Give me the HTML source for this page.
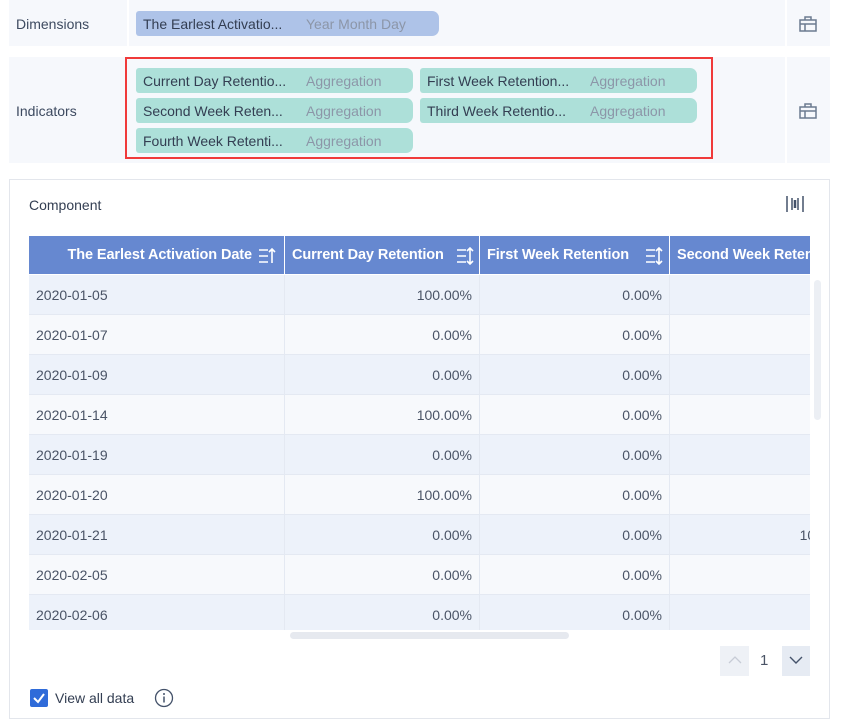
<!DOCTYPE html>
<html><head><style>
*{box-sizing:border-box;margin:0;padding:0}
body{width:846px;height:716px;background:#fff;font-family:"Liberation Sans",sans-serif;position:relative;overflow:hidden;color:#333e52}
.a{position:absolute}
.row{background:#f6f8fc}
.lab{font-size:14px;color:#3d4a60}
.pill{position:absolute;height:25px;border-radius:3px 7px 7px 3px;font-size:14px;line-height:26px;padding-left:7px;color:#333e52;white-space:nowrap}
.pill span{position:absolute;left:170px;color:#8c96a8}
.d{background:#aec3e8}
.i{background:#ade0d9}
.th{position:absolute;top:236px;height:38px;background:#6688d0;color:#fff;font-weight:bold;font-size:14px;line-height:39px;white-space:nowrap;overflow:hidden;border-right:1px solid #fff;letter-spacing:-0.1px}
.th svg{position:absolute;top:11px}
.tr{position:absolute;left:29px;width:781px;height:40px;border-bottom:1px solid #e4e9f2;font-size:14px;line-height:41px}
.c{position:absolute;top:0;height:40px;border-right:1px solid #e4e9f2;color:#4a5466}
</style></head><body>
<div class="a row" style="left:9px;top:0;width:821px;height:46px"></div>
<div class="a" style="left:127px;top:0;width:2px;height:46px;background:#fff"></div>
<div class="a" style="left:785px;top:0;width:2px;height:46px;background:#fff"></div>
<div class="a lab" style="left:16px;top:16px">Dimensions</div>
<div class="pill d" style="left:136px;top:11px;width:303px">The Earlest Activatio...<span>Year Month Day</span></div>
<svg class="a" style="left:798px;top:14px" width="20" height="20" viewBox="0 0 20 20" fill="none" stroke="#6b7a90" stroke-width="1.5"><path d="M7 6V3h6v3M2 6h16v11H2zM2 10h16M7 10v7"/></svg>

<div class="a row" style="left:9px;top:57px;width:821px;height:106px"></div>
<div class="a" style="left:785px;top:57px;width:2px;height:106px;background:#fff"></div>
<div class="a lab" style="left:16px;top:103px">Indicators</div>
<div class="a" style="left:125px;top:57px;width:588px;height:102px;border:2px solid #f03a3a"></div>
<div class="pill i" style="left:136px;top:68px;width:277px">Current Day Retentio...<span>Aggregation</span></div>
<div class="pill i" style="left:420px;top:68px;width:277px">First Week Retention...<span>Aggregation</span></div>
<div class="pill i" style="left:136px;top:98px;width:277px">Second Week Reten...<span>Aggregation</span></div>
<div class="pill i" style="left:420px;top:98px;width:277px">Third Week Retentio...<span>Aggregation</span></div>
<div class="pill i" style="left:136px;top:128px;width:277px">Fourth Week Retenti...<span>Aggregation</span></div>
<svg class="a" style="left:798px;top:101px" width="20" height="20" viewBox="0 0 20 20" fill="none" stroke="#6b7a90" stroke-width="1.5"><path d="M7 6V3h6v3M2 6h16v11H2zM2 10h16M7 10v7"/></svg>

<div class="a" style="left:9px;top:179px;width:821px;height:540px;border:1px solid #e3e6ec"></div>
<div class="a" style="left:29px;top:197px;font-size:14px;color:#333e52">Component</div>
<svg class="a" style="left:786px;top:195px" width="18" height="18" viewBox="0 0 18 18" stroke="#44526a" stroke-width="1.5"><path d="M1 1v16M17 1v16M6 3v12M12 3v12"/><path d="M9 5v8" stroke-width="2.5"/></svg>

<div class="th" style="left:29px;width:256px;text-align:right;padding-right:32px;font-size:14.5px">The Earlest Activation Date<svg style="right:8px" width="18" height="18" fill="none" stroke="#fff" stroke-width="1.6"><path d="M1 3h9M1 9h9M1 15h9M14 16V2M11 5l3-3 3 3"/></svg></div>
<div class="th" style="left:285px;width:195px;padding-left:7px;font-size:14.5px">Current Day Retention<svg style="left:171px" width="18" height="18" fill="none" stroke="#fff" stroke-width="1.6"><path d="M1 3h9M1 9h9M1 15h9M14 1v16M11 4l3-3 3 3M11 14l3 3 3-3"/></svg></div>
<div class="th" style="left:480px;width:190px;padding-left:7px;font-size:14.5px">First Week Retention<svg style="right:6px" width="18" height="18" fill="none" stroke="#fff" stroke-width="1.6"><path d="M1 3h9M1 9h9M1 15h9M14 1v16M11 4l3-3 3 3M11 14l3 3 3-3"/></svg></div>
<div class="th" style="left:670px;width:140px;padding-left:7px;border-right:none;font-size:14.5px">Second Week Retention</div>

<div class="tr" style="top:275px;background:#edf2fa"><div class="c" style="left:0;width:256px;padding-left:7px">2020-01-05</div><div class="c" style="left:256px;width:195px;text-align:right;padding-right:7px">100.00%</div><div class="c" style="left:451px;width:190px;text-align:right;padding-right:7px">0.00%</div></div>
<div class="tr" style="top:315px;background:#f7f9fc"><div class="c" style="left:0;width:256px;padding-left:7px">2020-01-07</div><div class="c" style="left:256px;width:195px;text-align:right;padding-right:7px">0.00%</div><div class="c" style="left:451px;width:190px;text-align:right;padding-right:7px">0.00%</div></div>
<div class="tr" style="top:355px;background:#edf2fa"><div class="c" style="left:0;width:256px;padding-left:7px">2020-01-09</div><div class="c" style="left:256px;width:195px;text-align:right;padding-right:7px">0.00%</div><div class="c" style="left:451px;width:190px;text-align:right;padding-right:7px">0.00%</div></div>
<div class="tr" style="top:395px;background:#f7f9fc"><div class="c" style="left:0;width:256px;padding-left:7px">2020-01-14</div><div class="c" style="left:256px;width:195px;text-align:right;padding-right:7px">100.00%</div><div class="c" style="left:451px;width:190px;text-align:right;padding-right:7px">0.00%</div></div>
<div class="tr" style="top:435px;background:#edf2fa"><div class="c" style="left:0;width:256px;padding-left:7px">2020-01-19</div><div class="c" style="left:256px;width:195px;text-align:right;padding-right:7px">0.00%</div><div class="c" style="left:451px;width:190px;text-align:right;padding-right:7px">0.00%</div></div>
<div class="tr" style="top:475px;background:#f7f9fc"><div class="c" style="left:0;width:256px;padding-left:7px">2020-01-20</div><div class="c" style="left:256px;width:195px;text-align:right;padding-right:7px">100.00%</div><div class="c" style="left:451px;width:190px;text-align:right;padding-right:7px">0.00%</div></div>
<div class="tr" style="top:515px;background:#edf2fa"><div class="c" style="left:0;width:256px;padding-left:7px">2020-01-21</div><div class="c" style="left:256px;width:195px;text-align:right;padding-right:7px">0.00%</div><div class="c" style="left:451px;width:190px;text-align:right;padding-right:7px">0.00%</div><div class="c" style="left:641px;width:140px;text-align:right;border:none;overflow:hidden;padding-right:0"><span style="position:relative;left:13px">100</span></div></div>
<div class="tr" style="top:555px;background:#f7f9fc"><div class="c" style="left:0;width:256px;padding-left:7px">2020-02-05</div><div class="c" style="left:256px;width:195px;text-align:right;padding-right:7px">0.00%</div><div class="c" style="left:451px;width:190px;text-align:right;padding-right:7px">0.00%</div></div>
<div class="tr" style="top:595px;height:35px;background:#edf2fa;border:none"><div class="c" style="left:0;width:256px;height:35px;padding-left:7px">2020-02-06</div><div class="c" style="left:256px;width:195px;height:35px;text-align:right;padding-right:7px">0.00%</div><div class="c" style="left:451px;width:190px;height:35px;text-align:right;padding-right:7px">0.00%</div></div>

<div class="a" style="left:814px;top:280px;width:7px;height:140px;border-radius:4px;background:#eceff4"></div>
<div class="a" style="left:290px;top:632px;width:279px;height:7px;border-radius:4px;background:#e6e9ef"></div>

<div class="a" style="left:720px;top:646px;width:29px;height:30px;background:#eef1f6"></div>
<svg class="a" style="left:727px;top:653px" width="16" height="14"><path d="M2 10l6-6 6 6" fill="none" stroke="#c7ccd6" stroke-width="1.3"/></svg>
<div class="a" style="left:760px;top:652px;font-size:15px;color:#4a5466">1</div>
<div class="a" style="left:782px;top:646px;width:28px;height:30px;background:#e6ebf3"></div>
<svg class="a" style="left:788px;top:653px" width="16" height="14"><path d="M2 4l6 6 6-6" fill="none" stroke="#44526a" stroke-width="1.4"/></svg>

<div class="a" style="left:30px;top:689px;width:18px;height:18px;border-radius:2px;background:#2f6bd9"></div>
<svg class="a" style="left:30px;top:689px" width="18" height="18"><path d="M4 9l4 4 6-8" fill="none" stroke="#fff" stroke-width="2"/></svg>
<div class="a" style="left:55px;top:690px;font-size:14px;color:#333e52">View all data</div>
<svg class="a" style="left:154px;top:688px" width="20" height="20"><circle cx="10" cy="10" r="8.5" fill="none" stroke="#44526a" stroke-width="1.3"/><path d="M10 8.5v6" stroke="#44526a" stroke-width="1.5"/><circle cx="10" cy="6" r="1" fill="#44526a"/></svg>
</body></html>
